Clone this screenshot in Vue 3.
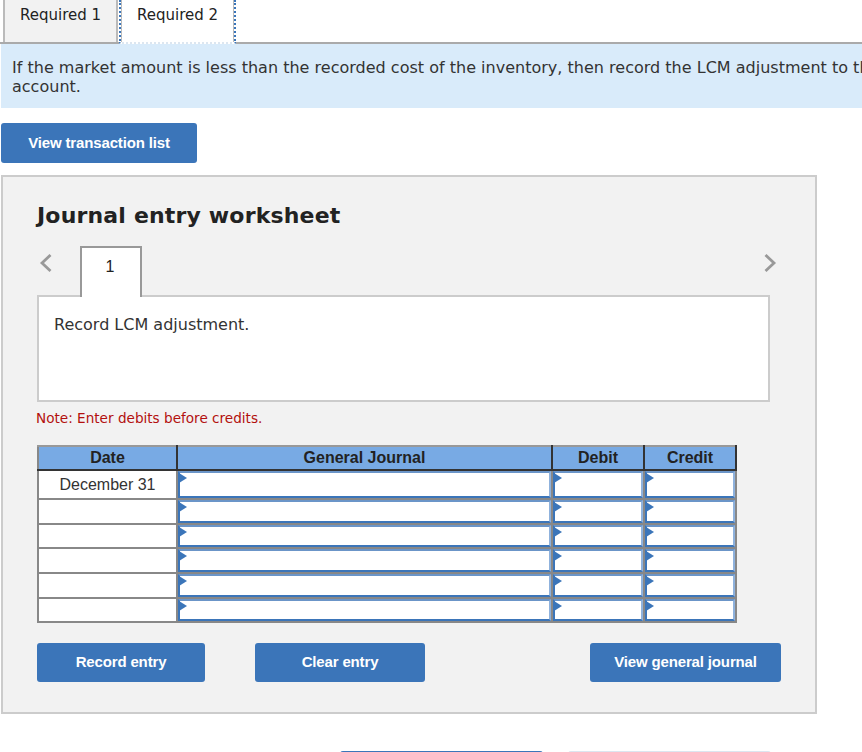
<script setup>
const rows = ['December 31', '', '', '', '', '']
const rowHeights = [29, 25, 24, 25, 25, 24]
</script>

<template>
  <div class="page">
    <div class="req-tabs">
      <div class="req-tab">Required 1</div>
      <div class="req-tab active">Required 2</div>
    </div>

    <div class="info">
      If the market amount is less than the recorded cost of the inventory, then record the LCM adjustment to the appropriate
      account.
    </div>

    <button class="btn list-btn">View transaction list</button>

    <div class="panel">
      <h2 class="title">Journal entry worksheet</h2>

      <div class="pager">
        <svg class="arrow" width="16" height="20" viewBox="0 0 16 20">
          <path d="M12.5 2 L4 10 L12.5 18" fill="none" stroke="#999" stroke-width="2.8" />
        </svg>
        <div class="page-tab">1</div>
        <svg class="arrow next" width="16" height="20" viewBox="0 0 16 20">
          <path d="M3.5 2 L12 10 L3.5 18" fill="none" stroke="#999" stroke-width="2.8" />
        </svg>
      </div>

      <div class="task">Record LCM adjustment.</div>
      <div class="note">Note: Enter debits before credits.</div>

      <table class="journal">
        <thead>
          <tr>
            <th class="c-date">Date</th>
            <th class="c-acct">General Journal</th>
            <th class="c-num">Debit</th>
            <th class="c-num">Credit</th>
          </tr>
        </thead>
        <tbody>
          <tr v-for="(date, i) in rows" :key="i" :style="{ height: rowHeights[i] + 'px' }">
            <td class="date-cell">{{ date }}</td>
            <td class="input-cell"><div class="field"></div></td>
            <td class="input-cell"><div class="field"></div></td>
            <td class="input-cell"><div class="field"></div></td>
          </tr>
        </tbody>
      </table>

      <div class="actions">
        <button class="btn record">Record entry</button>
        <button class="btn clear">Clear entry</button>
        <button class="btn journal-btn">View general journal</button>
      </div>
    </div>

    <div class="bottom-btns">
      <div class="stub dark"></div>
      <div class="stub light"></div>
    </div>
  </div>
</template>

<style>
html, body {
  margin: 0;
  overflow: hidden;
  background: #fff;
}
</style>

<style scoped>
.page {
  width: 862px;
  height: 752px;
  overflow: hidden;
  font-family: "DejaVu Sans", Verdana, sans-serif;
  color: #333;
}

.req-tabs {
  display: flex;
  height: 44px;
  box-sizing: border-box;
  border-bottom: 2px solid #aaa;
  padding-left: 3px;
  gap: 1px;
}

.req-tab {
  width: 115px;
  height: 42px;
  box-sizing: border-box;
  padding-top: 6px;
  text-align: center;
  font-size: 15px;
  line-height: 18px;
  background: #f2f2f2;
  border-left: 2px solid #bbb;
  border-right: 2px solid #bbb;
  color: #222;
}

.req-tab.active {
  width: 117px;
  background: #fff;
  height: 44px;
  border-left: 2px dotted #3a75b9;
  border-right: 2px dotted #3a75b9;
  border-bottom: 2px dotted #dce6f0;
  box-shadow: inset 1px 0 0 #bbb, inset -1px 0 0 #bbb;
}

.info {
  width: 1000px;
  height: 64px;
  margin-left: 1px;
  box-sizing: border-box;
  padding: 14px 11px 0;
  background: #d9ebfa;
  font-size: 16px;
  line-height: 19px;
  letter-spacing: 0.01px;
  color: #333;
}

.btn {
  display: block;
  border: 0;
  padding: 0 0 2px;
  height: 39px;
  border-radius: 3px;
  background: #3b75b9;
  color: #fff;
  font-family: "Liberation Sans", Arial, sans-serif;
  font-size: 15px;
  font-weight: bold;
  letter-spacing: -0.15px;
}

.list-btn {
  width: 196px;
  height: 40px;
  margin: 15px 0 12px 1px;
}

.panel {
  width: 816px;
  height: 539px;
  margin-left: 1px;
  box-sizing: border-box;
  background: #f2f2f2;
  border: 2px solid #ccc;
  padding: 0 0 0 33px;
}

.title {
  margin: 0 0 0 1px;
  padding-top: 25px;
  font-size: 22px;
  line-height: 28px;
  font-weight: bold;
  letter-spacing: 0.17px;
  color: #222;
}

.pager {
  display: flex;
  align-items: flex-start;
  margin-top: 16px;
  height: 49px;
  position: relative;
  z-index: 1;
}

.arrow {
  margin: 7px 0 0 2px;
}

.page-tab {
  width: 62px;
  height: 51px;
  box-sizing: border-box;
  margin-left: 26px;
  padding: 10px 2px 0 0;
  text-align: center;
  background: #fff;
  border: 2px solid #999;
  border-bottom: 0;
  font-family: "Liberation Sans", Arial, sans-serif;
  font-size: 16px;
  line-height: 18px;
  color: #222;
}

.arrow.next {
  margin-left: 620px;
}

.task {
  width: 733px;
  height: 107px;
  box-sizing: border-box;
  margin-left: 1px;
  padding: 18px 15px 0;
  background: #fff;
  border: 2px solid #ccc;
  font-size: 16px;
  line-height: 20px;
  color: #333;
}

.note {
  margin-top: 7px;
  font-size: 13.6px;
  line-height: 18px;
  color: #b3100e;
}

.journal {
  width: 698px;
  margin: 18px 0 0 1px;
  table-layout: fixed;
  border-collapse: collapse;
  font-family: "Liberation Sans", Arial, sans-serif;
  font-size: 16px;
}

.journal th {
  height: 22px;
  padding: 0;
  background: #78aae4;
  border: 2px solid #333;
  border-top: 2px solid #999;
  color: #222;
  font-weight: bold;
}

.journal th.c-date {
  border-left-color: #888;
}

.journal td {
  padding: 0;
  border: 2px solid #888;
  background: #fff;
  text-align: center;
  color: #333;
}

.c-date { width: 137px; }
.c-acct { width: 373px; }
.c-num { width: 90px; }

.input-cell {
  position: relative;
}

.field {
  position: absolute;
  inset: 0;
  box-sizing: border-box;
  border: 2px solid #3b75b9;
  border-top-color: #6b95c8;
  border-right-color: #8fb2dd;
  background: #fff;
}

.field::before {
  content: "";
  position: absolute;
  left: -1px;
  top: 0;
  border-left: 8px solid #3b75b9;
  border-top: 5px solid transparent;
  border-bottom: 5px solid transparent;
}

.actions {
  display: flex;
  margin: 20px 0 0 1px;
}

.record { width: 168px; }
.clear { width: 170px; margin-left: 50px; }
.journal-btn { width: 191px; margin-left: 165px; }

.bottom-btns {
  display: flex;
  margin: 37px 0 0 340px;
  gap: 25px;
}

.stub {
  width: 203px;
  height: 30px;
  border-radius: 3px;
}

.stub.dark { background: #3b75b9; }
.stub.light { background: #dce6f0; }
</style>
